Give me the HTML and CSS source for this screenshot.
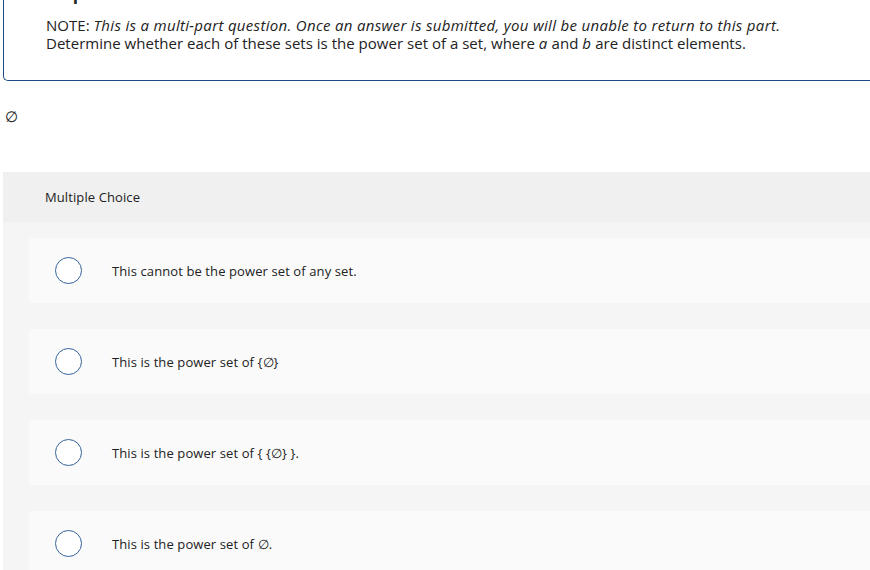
FILE: index.html
```html
<!DOCTYPE html>
<html>
<head>
<meta charset="utf-8">
<link rel="stylesheet" href="styles.css">
</head>
<body>
<div class="page">
  <div class="info">
    <h2 class="info-title">Required Information</h2>
    <p class="note">NOTE: <em>This is a multi-part question. Once an answer is submitted, you will be unable to return to this part.</em><br>Determine whether each of these sets is the power set of a set, where <em>a</em> and <em>b</em> are distinct elements.</p>
  </div>
  <div class="setline">∅</div>
  <div class="mc">
    <div class="mc-head">Multiple Choice</div>
    <div class="mc-body">
      <div class="opt"><span class="radio"></span><span class="opt-text">This cannot be the power set of any set.</span></div>
      <div class="opt"><span class="radio"></span><span class="opt-text">This is the power set of {∅}</span></div>
      <div class="opt"><span class="radio"></span><span class="opt-text">This is the power set of { {∅} }.</span></div>
      <div class="opt"><span class="radio"></span><span class="opt-text">This is the power set of ∅.</span></div>
    </div>
  </div>
</div>
</body>
</html>
```
FILE: styles.css
```css
html, body {
  margin: 0;
  padding: 0;
  background: #ffffff;
  overflow: hidden;
}
body {
  font-family: "Open Sans", "Liberation Sans", sans-serif;
  color: #222;
}
.page {
  padding-left: 3px;
  width: 900px;
}
.info {
  margin-top: -40px;
  border-left: 1px solid #1b4a82;
  border-bottom: 1px solid #1b4a82;
  border-bottom-left-radius: 5px;
  padding: 24px 0 0 42px;
  height: 121px;
  box-sizing: border-box;
}
.info-title {
  margin: 0;
  font-size: 17px;
  font-weight: 700;
  line-height: 20px;
  color: #222;
}
.note {
  margin: 12px 0 0;
  font-size: 15px;
  line-height: 18px;
  color: #222;
  letter-spacing: 0.02px;
}
.note em {
  font-style: italic;
  letter-spacing: 0.32px;
}
.setline {
  margin-top: 27px;
  margin-left: 2px;
  font-family: "DejaVu Sans", sans-serif;
  font-size: 15px;
  line-height: 18px;
  color: #222;
}
.mc {
  margin-top: 46px;
}
.mc-head {
  background: #f0f0f0;
  height: 50px;
  display: flex;
  align-items: center;
  padding-left: 42px;
  font-size: 13px;
  letter-spacing: 0.1px;
  color: #222;
}
.mc-body {
  background: #f5f5f5;
  padding: 16px 0 20px 26px;
  display: flex;
  flex-direction: column;
  gap: 26px;
}
.opt {
  background: #fafafa;
  height: 65px;
  border-radius: 3px 0 0 3px;
  display: flex;
  align-items: center;
}
.radio {
  width: 25px;
  height: 25px;
  border: 1.5px solid #35629a;
  border-radius: 50%;
  background: #fff;
  margin-left: 26px;
  flex: none;
}
.opt-text {
  margin-left: 30px;
  font-size: 13px;
  color: #222;
  letter-spacing: 0.1px;
}
```
